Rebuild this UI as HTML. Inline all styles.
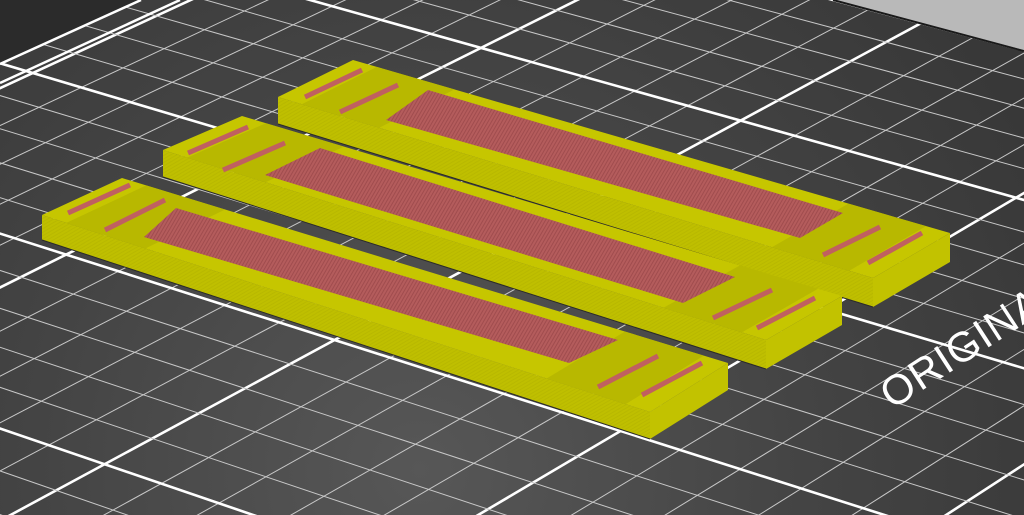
<!DOCTYPE html>
<html><head><meta charset="utf-8">
<style>
html,body{margin:0;padding:0;width:1024px;height:515px;overflow:hidden;background:#3d3d3d}
svg{display:block}
</style></head>
<body>
<svg id="s" width="1024" height="515" viewBox="0 0 1024 515" xmlns="http://www.w3.org/2000/svg">
<defs>
<radialGradient id="bg" cx="420" cy="470" r="700" gradientUnits="userSpaceOnUse">
<stop offset="0" stop-color="#575757"/><stop offset="0.55" stop-color="#444444"/><stop offset="1" stop-color="#383838"/>
</radialGradient>
<pattern id="rp" width="3" height="3" patternUnits="userSpaceOnUse" patternTransform="rotate(30)">
<rect width="3" height="3" fill="#b45c5c"/><rect width="1" height="3" fill="#a04c4e"/>
</pattern>
<pattern id="yp" width="3" height="3" patternUnits="userSpaceOnUse" patternTransform="rotate(60)">
<rect width="3" height="3" fill="#c4c400"/><rect width="1" height="3" fill="#b0b000"/>
</pattern>
</defs>
<rect width="1024" height="515" fill="url(#bg)"/>
<g id="grid"></g>
<polygon points="0,0 140,0 0,63" fill="#2b2b2b"/>
<line x1="0" y1="64" x2="141" y2="0" stroke="#fff" stroke-width="2.5"/>
<line x1="0" y1="83" x2="180" y2="0" stroke="#fff" stroke-width="2.5"/>
<polygon points="833,0 1024,0 1024,50" fill="#b9b9b9"/>
<line x1="833" y1="0" x2="1024" y2="51" stroke="#1a1a1a" stroke-width="2"/>
<text x="0" y="0" transform="translate(892,410) rotate(-33)" font-family="Liberation Sans, sans-serif" font-size="42" fill="#ffffff" letter-spacing="1">ORIGINAL</text>
<g id="bars"></g>
</svg>
<script>
(function(){
var src=[[0,0],[5,0],[0,10],[5,10]];
var dst=[[740.7,120.6],[1016,197.7],[334.5,340],[620.5,431]];
var A=[],b=[];
for(var i=0;i<4;i++){var u=src[i][0],v=src[i][1],x=dst[i][0],y=dst[i][1];
A.push([u,v,1,0,0,0,-u*x,-v*x]);b.push(x);
A.push([0,0,0,u,v,1,-u*y,-v*y]);b.push(y);}
var n=8;
for(var c=0;c<n;c++){var p=c;for(var r=c+1;r<n;r++)if(Math.abs(A[r][c])>Math.abs(A[p][c]))p=r;
var t=A[c];A[c]=A[p];A[p]=t;t=b[c];b[c]=b[p];b[p]=t;
for(var r=0;r<n;r++){if(r==c)continue;var f=A[r][c]/A[c][c];for(var k=c;k<n;k++)A[r][k]-=f*A[c][k];b[r]-=f*b[c];}}
var h=[];for(var i=0;i<n;i++)h.push(b[i]/A[i][i]);
function P(u,v){var w=h[6]*u+h[7]*v+1;return[(h[0]*u+h[1]*v+h[2])/w,(h[3]*u+h[4]*v+h[5])/w];}
var g='';
function ln(a,c,maj){g+='<line x1="'+a[0].toFixed(1)+'" y1="'+a[1].toFixed(1)+'" x2="'+c[0].toFixed(1)+'" y2="'+c[1].toFixed(1)+'" stroke="'+(maj?'#ffffff':'#c8c8c8')+'" stroke-width="'+(maj?2.6:1)+'"/>';}
for(var u=-25;u<=25;u++){ln(P(u,-15),P(u,30),u%5==0);}
for(var v=-15;v<=30;v++){ln(P(-25,v),P(25,v),v%5==0);}
document.getElementById('grid').innerHTML=g;

var bars=[
 {BTL:[353,60],FTL:[278,97],FTR:[873,278],BTR:[950,233],hl:27,hr:29,
  red:[[428,90],[386,120],[800,238],[843,213]],
  st:[[305,97,362,70],[340,112,398,85],[823,255,880,227],[868,263,922,233]]},
 {BTL:[242,116],FTL:[163,150],FTR:[766,340],BTR:[842,296],hl:27,hr:29,
  red:[[320,148],[265,175],[683,303],[735,277]],
  st:[[188,153,248,127],[223,170,285,143],[713,318,772,290],[757,328,815,298]]},
 {BTL:[122,178],FTL:[42,215],FTR:[650,412],BTR:[728,363],hl:25,hr:27,
  red:[[176,208],[144,237],[569,363],[618,340]],
  st:[[68,213,130,185],[105,230,165,200],[598,387,658,356],[642,395,702,363]]}
];
function pts(a){return a.map(function(p){return p[0]+','+p[1];}).join(' ');}
function lerp(a,c,t){return[a[0]+(c[0]-a[0])*t,a[1]+(c[1]-a[1])*t];}
var s='';
bars.forEach(function(B){
 var FTLb=[B.FTL[0],B.FTL[1]+B.hl],FTRb=[B.FTR[0],B.FTR[1]+B.hr],BTRb=[B.BTR[0],B.BTR[1]+B.hr];
 s+='<polygon points="'+pts([B.FTL,B.FTR,FTRb,FTLb])+'" fill="#bcbc00"/>';
 s+='<polygon points="'+pts([B.FTL,B.FTR,FTRb,FTLb])+'" fill="url(#yp)" opacity="0.35"/>';
 s+='<polygon points="'+pts([B.FTR,B.BTR,BTRb,FTRb])+'" fill="#c2c200"/>';
 s+='<line x1="'+FTLb[0]+'" y1="'+FTLb[1]+'" x2="'+FTRb[0]+'" y2="'+FTRb[1]+'" stroke="#2a2a2a" stroke-width="1"/>';
 s+='<polygon points="'+pts([B.BTL,B.FTL,B.FTR,B.BTR])+'" fill="#c6c600"/>';
 // darker stepped end zones
 var f1=lerp(B.FTL,B.FTR,0.04),b1=lerp(B.BTL,B.BTR,0.04),f2=lerp(B.FTL,B.FTR,0.17),b2=lerp(B.BTL,B.BTR,0.17);
 s+='<polygon points="'+pts([b1,f1,f2,b2])+'" fill="#b4b400" opacity="0.8"/>';
 var f3=lerp(B.FTL,B.FTR,0.83),b3=lerp(B.BTL,B.BTR,0.83),f4=lerp(B.FTL,B.FTR,0.96),b4=lerp(B.BTL,B.BTR,0.96);
 s+='<polygon points="'+pts([b3,f3,f4,b4])+'" fill="#b4b400" opacity="0.8"/>';
 s+='<polygon points="'+pts(B.red)+'" fill="url(#rp)"/>';
 B.st.forEach(function(q){s+='<line x1="'+q[0]+'" y1="'+q[1]+'" x2="'+q[2]+'" y2="'+q[3]+'" stroke="#c06060" stroke-width="5"/>';});
});
document.getElementById('bars').innerHTML=s;
})();
</script>
</body></html>
